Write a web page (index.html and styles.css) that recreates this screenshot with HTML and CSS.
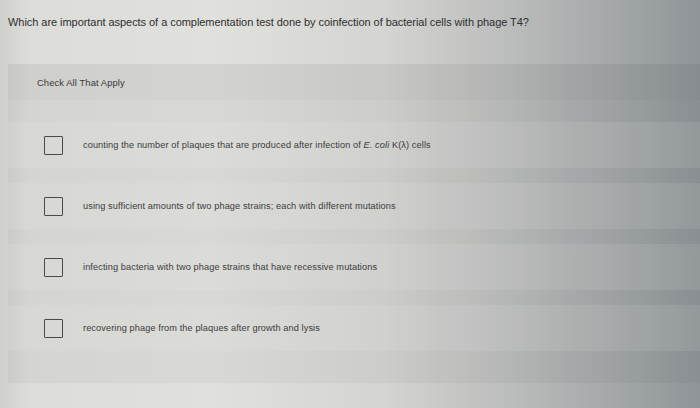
FILE: index.html
```html
<!DOCTYPE html>
<html>
<head>
<meta charset="utf-8">
<link rel="stylesheet" href="styles.css">
</head>
<body>
<div class="screen">
  <div class="question">Which are important aspects of a complementation test done by coinfection of bacterial cells with phage T4?</div>
  <div class="panel">
    <div class="panel-head">Check All That Apply</div>
    <div class="options">
      <div class="option"><span class="box"></span><span class="label">counting the number of plaques that are produced after infection of <i>E. coli</i> K(λ) cells</span></div>
      <div class="option"><span class="box"></span><span class="label">using sufficient amounts of two phage strains; each with different mutations</span></div>
      <div class="option"><span class="box"></span><span class="label">infecting bacteria with two phage strains that have recessive mutations</span></div>
      <div class="option"><span class="box"></span><span class="label">recovering phage from the plaques after growth and lysis</span></div>
    </div>
  </div>
</div>
</body>
</html>
```

FILE: styles.css
```css
html, body {
  margin: 0;
  padding: 0;
}
body {
  width: 700px;
  height: 408px;
  overflow: hidden;
  font-family: "Liberation Sans", Arial, sans-serif;
  color: #3a3a3a;
}
.screen {
  width: 700px;
  height: 408px;
  background: linear-gradient(to right, #cfcfcc 0%, #dcdcd8 4%, #e0e0dc 30%, #d4d4d1 55%, #b8bab9 75%, #8f9598 100%);
  display: flex;
  flex-direction: column;
}
.question {
  padding: 16px 0 0 8px;
  height: 64px;
  box-sizing: border-box;
  font-size: 11px;
  letter-spacing: -0.05px;
  color: #2f2f2f;
}
.panel {
  margin-left: 8px;
  height: 319px;
  background: rgba(0, 0, 0, 0.035);
  display: flex;
  flex-direction: column;
}
.panel-head {
  height: 36px;
  padding-left: 29px;
  display: flex;
  align-items: center;
  font-size: 9.4px;
  letter-spacing: 0.1px;
  color: #3a3a3a;
  background: rgba(0, 0, 0, 0.02);
}
.options {
  padding-top: 22px;
  display: flex;
  flex-direction: column;
  gap: 15px;
}
.option {
  height: 46px;
  display: flex;
  align-items: center;
  padding-left: 36px;
  background: rgba(255, 255, 255, 0.09);
}
.box {
  width: 17px;
  height: 17px;
  border: 1.5px solid #4a4a4a;
  border-radius: 1px;
  flex: none;
}
.label {
  margin-left: 20px;
  font-size: 9.2px;
  color: #3c3c3c;
  letter-spacing: 0.1px;
}
```
